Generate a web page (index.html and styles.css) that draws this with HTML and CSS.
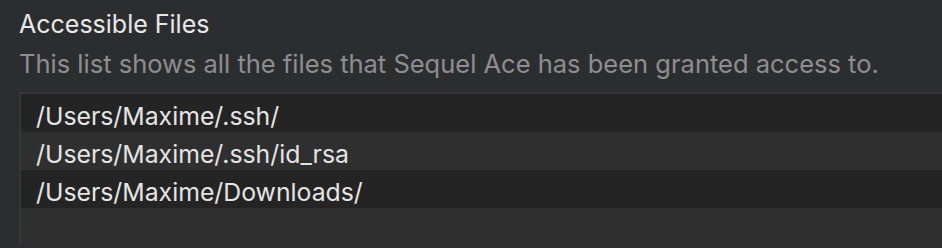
FILE: index.html
```html
<!DOCTYPE html>
<html>
<head>
<meta charset="utf-8">
<link rel="stylesheet" href="styles.css">
</head>
<body>
<div class="pane">
  <h1 class="title">Accessible Files</h1>
  <p class="subtitle">This list shows all the files that Sequel Ace has been granted access to.</p>
  <div class="table">
    <div class="row odd">/Users/Maxime/.ssh/</div>
    <div class="row even">/Users/Maxime/.ssh/id_rsa</div>
    <div class="row odd">/Users/Maxime/Downloads/</div>
    <div class="row even"></div>
  </div>
</div>
</body>
</html>
```
FILE: styles.css
```css
html, body {
  margin: 0;
  padding: 0;
  background: #2c2d2f;
  width: 942px;
  height: 248px;
  overflow: hidden;
}
.pane {
  padding: 10px 0 0 19px;
  font-family: Inter, "Noto Sans", sans-serif;
  -webkit-font-smoothing: antialiased;
}
.title {
  margin: 0;
  font-size: 25px;
  font-weight: 400;
  line-height: 28px;
  color: #e8e8e8;
}
.subtitle {
  margin: 12px 0 0 0;
  font-size: 25.5px;
  font-weight: 400;
  line-height: 28px;
  color: #8e8e90;
}
.table {
  margin-top: 14px;
  border-top: 2px solid #363638;
  border-left: 2px solid #363638;
  display: flex;
  flex-direction: column;
}
.row {
  box-sizing: border-box;
  height: 38px;
  padding: 7px 0 0 15px;
  line-height: 31px;
  font-size: 24.8px;
  color: #e4e4e4;
  white-space: nowrap;
}
.odd { background: #242424; }
.even { background: #2f2f2f; }
```
